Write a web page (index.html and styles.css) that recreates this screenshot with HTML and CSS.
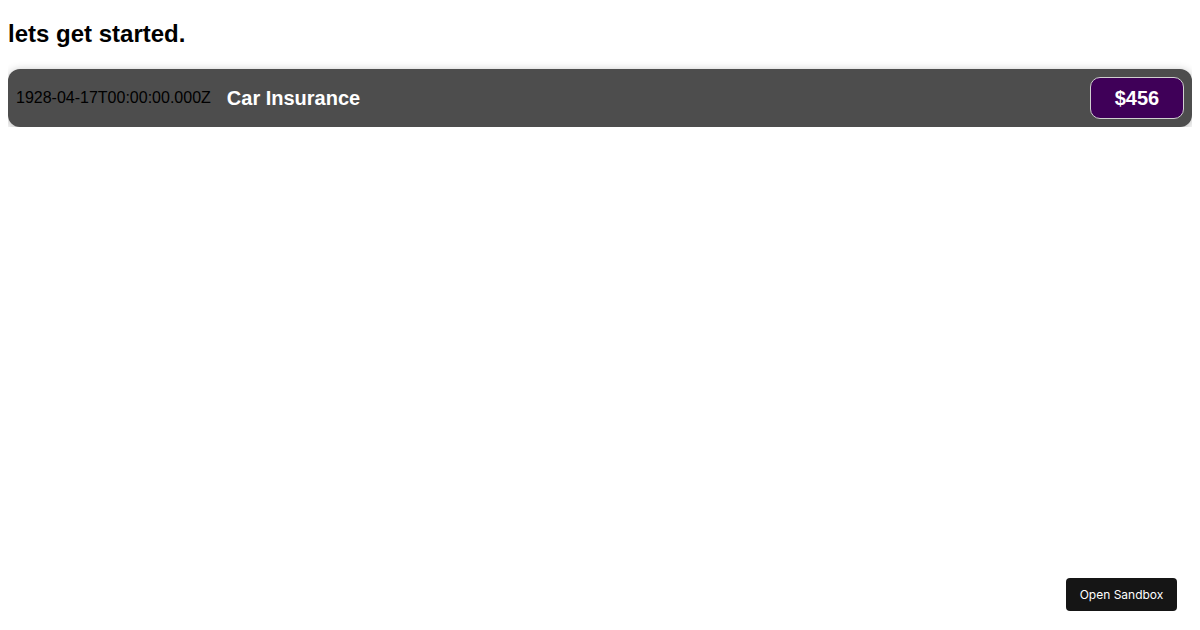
FILE: index.html
```html
<!DOCTYPE html>
<html>
<head>
<meta charset="utf-8">
<link rel="stylesheet" href="styles.css">
</head>
<body>
<h2 class="title">lets get started.</h2>
<div class="card">
  <span class="date">1928-04-17T00:00:00.000Z</span>
  <span class="name">Car Insurance</span>
  <span class="price">$456</span>
</div>
<a class="sandbox">Open Sandbox</a>
</body>
</html>
```
FILE: styles.css
```css
body {
  margin: 8px;
  font-family: "Liberation Sans", Arial, sans-serif;
  background: #fff;
  color: #000;
}
.title {
  font-size: 24px;
  font-weight: bold;
  margin: 12px 0 21px;
  line-height: 28px;
}
.card {
  display: flex;
  align-items: center;
  height: 58px;
  box-sizing: border-box;
  padding: 8px;
  background: #4d4d4d;
  border-radius: 12px;
  box-shadow: 0 2px 10px rgba(0, 0, 0, 0.3);
}
.date {
  font-size: 16px;
  color: #000;
}
.name {
  margin-left: 16px;
  font-size: 20px;
  font-weight: bold;
  color: #fff;
}
.price {
  margin-left: auto;
  width: 94px;
  height: 42px;
  box-sizing: border-box;
  display: flex;
  align-items: center;
  justify-content: center;
  background: #3f0058;
  border: 1px solid #d0d0d0;
  border-radius: 10px;
  color: #fff;
  font-size: 20px;
  font-weight: bold;
}
.sandbox {
  position: fixed;
  right: 23px;
  bottom: 19px;
  width: 111px;
  height: 33px;
  box-sizing: border-box;
  display: flex;
  align-items: center;
  justify-content: center;
  background: #151515;
  color: #fff;
  border-radius: 4px;
  font-family: Inter, "Liberation Sans", sans-serif;
  font-size: 12px;
}
```
